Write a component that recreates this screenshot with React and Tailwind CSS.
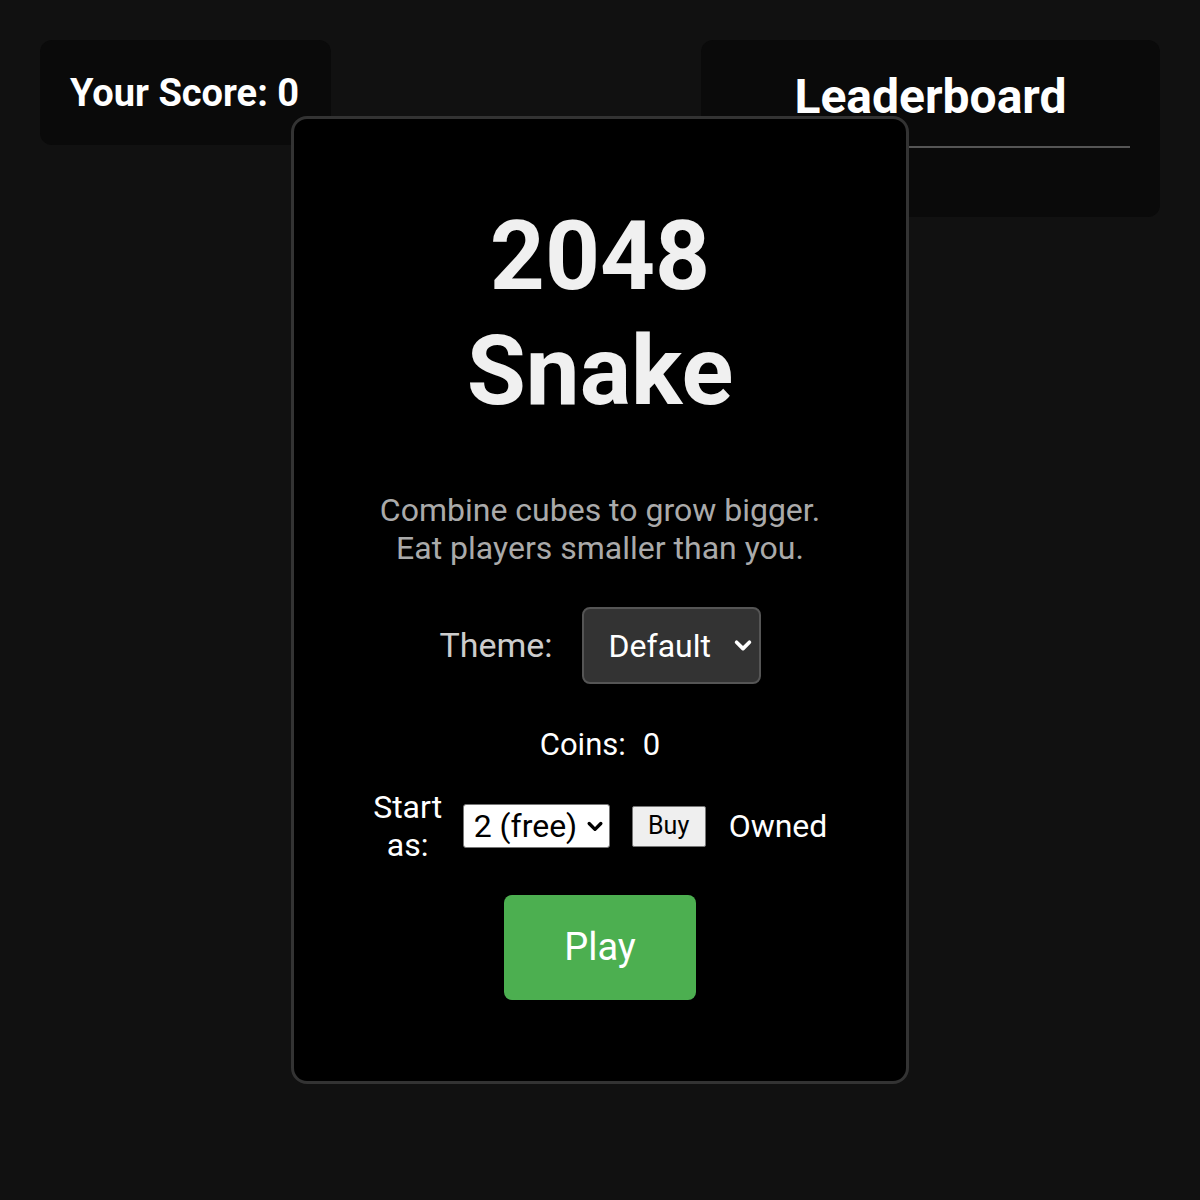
import { useState } from "react";

// chevron used inside the custom selects
function Chevron({ className }) {
  return (
    <svg viewBox="0 0 24 24" className={className} fill="none" stroke="currentColor" strokeWidth="4" strokeLinecap="round" strokeLinejoin="round">
      <path d="M5 9l7 7 7-7" />
    </svg>
  );
}

function App() {
  const [theme, setTheme] = useState("default");
  const [startAs, setStartAs] = useState("2");

  return (
    <div className="relative min-h-screen bg-[#111111] text-white font-['Roboto',sans-serif]">

      {/* TOP BAR */}

      <div className="flex justify-between items-start p-10">

        <div className="bg-[#0a0a0a] rounded-xl px-[30px] py-[29px] h-[105px] w-[291px]">
          <h2 className="text-[38px] font-bold leading-[48px] whitespace-nowrap">
            Your Score: 0
          </h2>
        </div>

        <div className="bg-[#0a0a0a] rounded-xl px-[30px] pt-[28px] w-[459px] h-[177px]">
          <h2 className="text-[48px] font-bold leading-[58px] text-center">
            Leaderboard
          </h2>
          <div className="mt-[20px] border-t-2 border-[#555555]"></div>
        </div>

      </div>

      {/* START MENU */}

      <div className="absolute left-[291px] top-[116px] w-[618px] h-[968px] bg-black border-[3px] border-[#333333] rounded-2xl flex flex-col items-center pt-[80px]">

        <h1 className="text-[96px] font-bold leading-[115px] text-[#f0f0f0] text-center">
          2048
          <br />
          Snake
        </h1>

        <p className="mt-[62px] text-[32px] leading-[38px] text-[#aaaaaa] text-center">
          Combine cubes to grow bigger.
          <br />
          Eat players smaller than you.
        </p>

        <div className="mt-[40px] flex items-center gap-[29px]">
          <span className="text-[34px] text-[#cccccc]">Theme:</span>
          <div className="relative">
            <select
              value={theme}
              onChange={(e) => setTheme(e.target.value)}
              className="appearance-none bg-[#333333] border-2 border-[#555555] rounded-lg h-[77px] w-[179px] pl-[25px] text-[32px] text-white outline-none"
            >
              <option value="default">Default</option>
              <option value="neon">Neon</option>
            </select>
            <Chevron className="absolute right-[7px] top-[27px] w-[22px] h-[22px] text-white pointer-events-none" />
          </div>
        </div>

        <div className="mt-[43px] text-[31px] leading-[36px] flex gap-[17px]">
          <span>Coins:</span>
          <span>0</span>
        </div>

        <div className="mt-[25px] flex items-center">
          <span className="w-[70px] text-[32px] leading-[38px] text-center">
            Start as:
          </span>
          <div className="relative ml-[20px]">
            <select
              value={startAs}
              onChange={(e) => setStartAs(e.target.value)}
              className="appearance-none bg-white border border-[#767676] rounded-[3px] h-[44px] w-[147px] pl-[10px] text-[32px] leading-[38px] text-black outline-none"
            >
              <option value="2">2 (free)</option>
              <option value="4">4</option>
              <option value="8">8</option>
            </select>
            <Chevron className="absolute right-[5px] top-[12px] w-[20px] h-[20px] text-black pointer-events-none" />
          </div>
          <button className="ml-[22px] bg-[#efefef] border border-[#767676] rounded-[2px] h-[41px] w-[74px] text-[25px] text-black">
            Buy
          </button>
          <span className="ml-[23px] text-[32px]">Owned</span>
        </div>

        <button className="mt-[31px] bg-[#4caf50] rounded-lg w-[192px] h-[105px] text-[38px] text-white">
          Play
        </button>

      </div>

    </div>
  );
}

export default App;
